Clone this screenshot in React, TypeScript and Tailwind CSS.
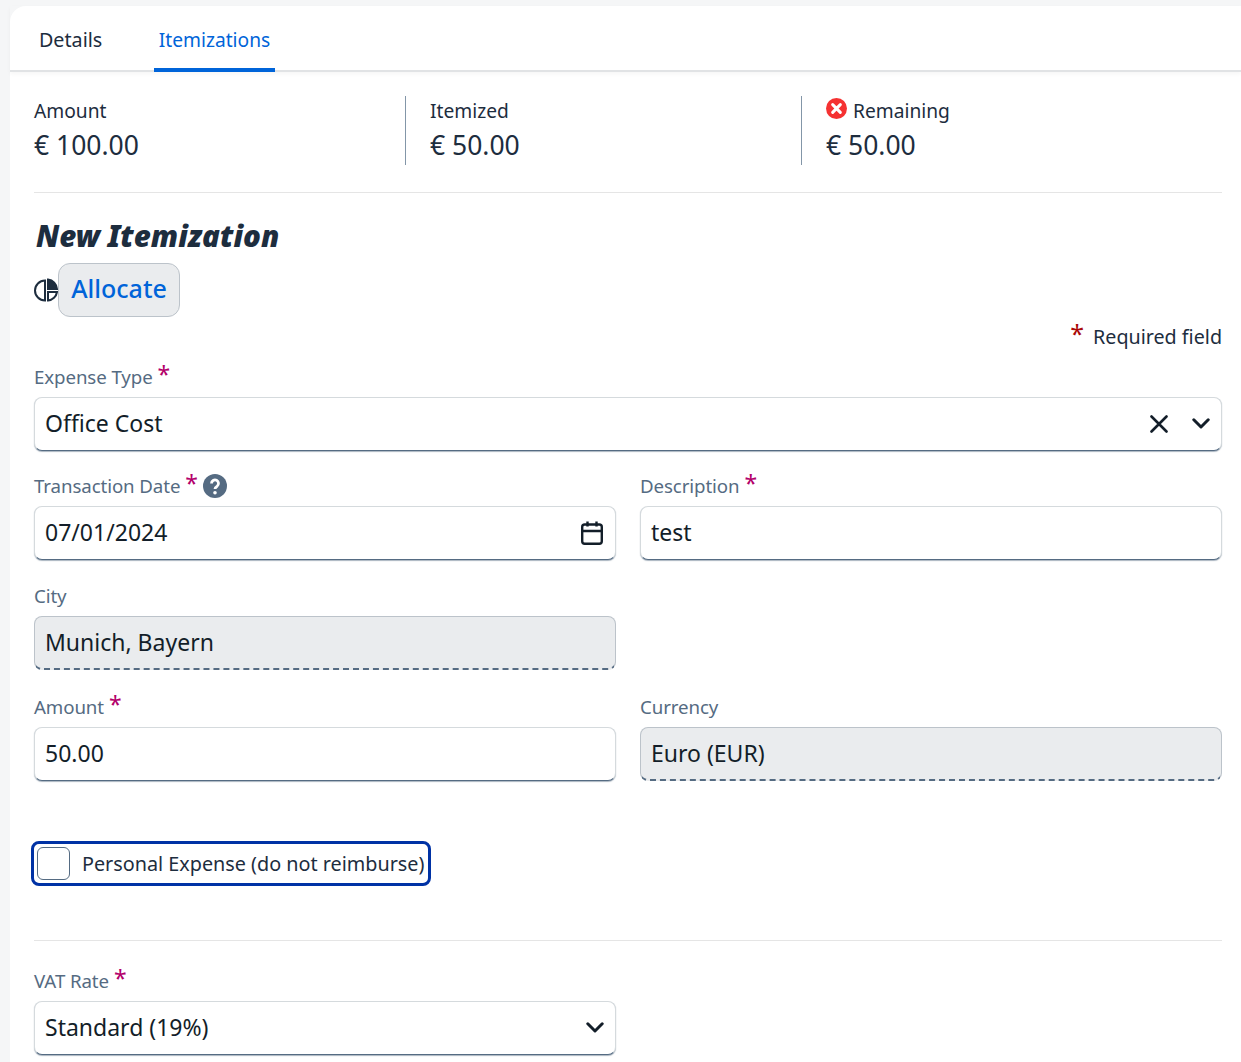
const font = { fontFamily: '"Noto Sans", sans-serif' };

function Label({ text, required }: { text: string; required?: boolean }) {
	return (
		<div className="flex h-[30px] items-center text-[18.7px] leading-[30px] tracking-[-0.1px] text-[#556b82]">
			<span>{text}</span>
			{required && <span className="ml-[5px] -mt-[6px] text-[23px] leading-[23px] text-[#b3006b]">*</span>}
		</div>
	);
}

function Chevron() {
	return (
		<svg viewBox="0 0 18 11" className="h-[11px] w-[18px]" fill="none" stroke="#131e29" strokeWidth="3" strokeLinecap="round" strokeLinejoin="round">
			<path d="M1.800 1.800L9 9l7.200-7.200" />
		</svg>
	);
}

function Field({
	value,
	readOnly,
	children,
}: {
	value: string;
	readOnly?: boolean;
	children?: React.ReactNode;
}) {
	return (
		<div
			className={
				readOnly
					? "flex h-[54px] items-center rounded-lg border border-[#bcc3ca] border-b-2 border-b-[#556b82] [border-bottom-style:dashed] bg-[#eaecee] pb-[1px] pl-[10px] pr-[11px] text-[23px] text-[#131e29]"
					: "flex h-[54px] items-center rounded-lg border border-[#d5dadd] border-b-[#556b82] bg-white pb-[1px] pl-[10px] pr-[11px] text-[23px] text-[#131e29] shadow-[0_1px_1px_rgba(85,107,130,0.5)]"
			}
		>
			<span className="flex-1">{value}</span>
			{children}
		</div>
	);
}

function Summary({ label, value, error, divider }: { label: string; value: string; error?: boolean; divider?: boolean }) {
	return (
		<div className={divider ? "h-[69px] w-[372px] border-r border-[#8396a8]" : "h-[69px]"}>
			<div className="flex h-[30px] items-center text-[19.2px] text-[#1d2d3e]">
				{error && (
					<svg viewBox="0 0 22 22" className="mr-[6px] -mt-[6px] h-[21px] w-[21px]">
						<circle cx="11" cy="11" r="11" fill="#f53232" />
						<path d="M7 7l8 8M15 7l-8 8" stroke="#fff" strokeWidth="3.200" strokeLinecap="round" />
					</svg>
				)}
				<span>{label}</span>
			</div>
			<div className="mt-[2px] text-[26.5px] leading-[34px] text-[#1d2d3e]">{value}</div>
		</div>
	);
}

export default function App() {
	return (
		<div className="h-[1062px] overflow-hidden bg-[#f5f6f7] pt-[6px] pl-[10px]" style={font}>
			<div className="h-[1056px] rounded-tl-2xl bg-white">
				{/* Tabs */}
				<div className="flex h-[66px] border-b-2 border-[#e1e3e5] pl-[24px] shadow-[0_2px_4px_rgba(0,0,0,0.04)]">
					<div className="flex h-[66px] w-[120px] items-center pl-[5px] pt-[2px] text-[19.7px] text-[#1d2d3e]">Details</div>
					<div className="flex h-[66px] w-[121px] items-center justify-center border-b-4 border-[#0064d9] pt-[6px] text-[19.2px] text-[#0064d9]">
						Itemizations
					</div>
				</div>

				<div className="pl-[24px] pr-[19px]">
					{/* Totals */}
					<div className="grid h-[121px] grid-cols-[396px_396px_1fr] border-b border-[#e5e5e5] pt-[24px]">
						<Summary label="Amount" value="€ 100.00" divider />
						<Summary label="Itemized" value="€ 50.00" divider />
						<Summary label="Remaining" value="€ 50.00" error />
					</div>

					<h2 className="mt-[23px] pl-[2px] text-[29.5px] leading-[40px] font-black text-[#1d2d3e] italic">New Itemization</h2>

					<div className="mt-[7px] flex items-center">
						<svg viewBox="0 0 24 24" className="h-[24px] w-[24px]" fill="none" stroke="#1d2d3e" strokeWidth="2">
							<path d="M11 2.500a10 10 0 0 0 0 20z" />
							<path d="M14 1.500a10 10 0 0 1 9 9.500h-9z" fill="#1d2d3e" />
							<path d="M14 14h9a10 10 0 0 1-9 8.500z" />
						</svg>
						<button className="flex h-[54px] w-[122px] items-center justify-center rounded-xl border border-[#bcc3ca] bg-[#eaecee] pb-[3px] text-[25px] font-medium text-[#0064d9]">
							Allocate
						</button>
					</div>

					<div className="mt-[4px] flex h-[32px] items-center justify-end text-[19.7px] text-[#1d2d3e]">
						<span className="mr-[9px] -mt-[7px] text-[25px] leading-[25px] text-[#aa0808]">*</span>
						Required field
					</div>

					<div className="mt-[9px]">
						<Label text="Expense Type" required />
					</div>
					<div className="mt-[5px]">
						<Field value="Office Cost">
							<svg viewBox="0 0 18 18" className="mr-[24px] h-[18px] w-[18px]" fill="none" stroke="#131e29" strokeWidth="2.600" strokeLinecap="round">
								<path d="M1.500 1.500l15 15M16.500 1.500l-15 15" />
							</svg>
							<Chevron />
						</Field>
					</div>

					<div className="mt-[20px] grid grid-cols-2 gap-x-[24px]">
						<div>
							<div className="flex items-center">
								<Label text="Transaction Date" required />
								<svg viewBox="0 0 24 24" className="ml-[5px] h-[24px] w-[24px]">
									<circle cx="12" cy="12" r="12" fill="#556b82" />
									<path d="M8.500 9.500a3.500 3.500 0 1 1 5.500 2.800c-1.300.9-2 1.400-2 2.700" fill="none" stroke="#fff" strokeWidth="2.800" />
									<circle cx="12" cy="18.800" r="1.800" fill="#fff" />
								</svg>
							</div>
							<div className="mt-[5px]">
								<Field value="07/01/2024">
									<svg viewBox="0 0 22 24" className="mr-[1px] h-[24px] w-[22px]" fill="none" stroke="#131e29" strokeWidth="2.400">
										<rect x="1.200" y="3.500" width="19.600" height="19.300" rx="2.500" />
										<path d="M1.200 10h19.600M6.500 0.500v5M15.500 0.500v5" />
									</svg>
								</Field>
							</div>
						</div>
						<div>
							<Label text="Description" required />
							<div className="mt-[5px]">
								<Field value="test" />
							</div>
						</div>
					</div>

					<div className="mt-[21px] grid grid-cols-2 gap-x-[24px]">
						<div>
							<Label text="City" />
							<div className="mt-[5px]">
								<Field value="Munich, Bayern" readOnly />
							</div>
						</div>
					</div>

					<div className="mt-[22px] grid grid-cols-2 gap-x-[24px]">
						<div>
							<Label text="Amount" required />
							<div className="mt-[5px]">
								<Field value="50.00" />
							</div>
						</div>
						<div>
							<Label text="Currency" />
							<div className="mt-[5px]">
								<Field value="Euro (EUR)" readOnly />
							</div>
						</div>
					</div>

					<div className="mt-[60px] -ml-[3px] flex h-[45px] w-[400px] items-center rounded-lg border-[3px] border-[#0032a5] pl-[3px] text-[19.8px] text-[#1d2d3e]">
						<div className="h-[33px] w-[33px] rounded-md border border-[#556b82] bg-white" />
						<span className="ml-[12px] whitespace-nowrap">Personal Expense (do not reimburse)</span>
					</div>

					<div className="mt-[54px] border-t border-[#e5e5e5]" />

					<div className="mt-[25px] grid grid-cols-2 gap-x-[24px]">
						<div>
							<Label text="VAT Rate" required />
							<div className="mt-[5px]">
								<Field value="Standard (19%)">
									<Chevron />
								</Field>
							</div>
						</div>
					</div>
				</div>
			</div>
		</div>
	);
}
